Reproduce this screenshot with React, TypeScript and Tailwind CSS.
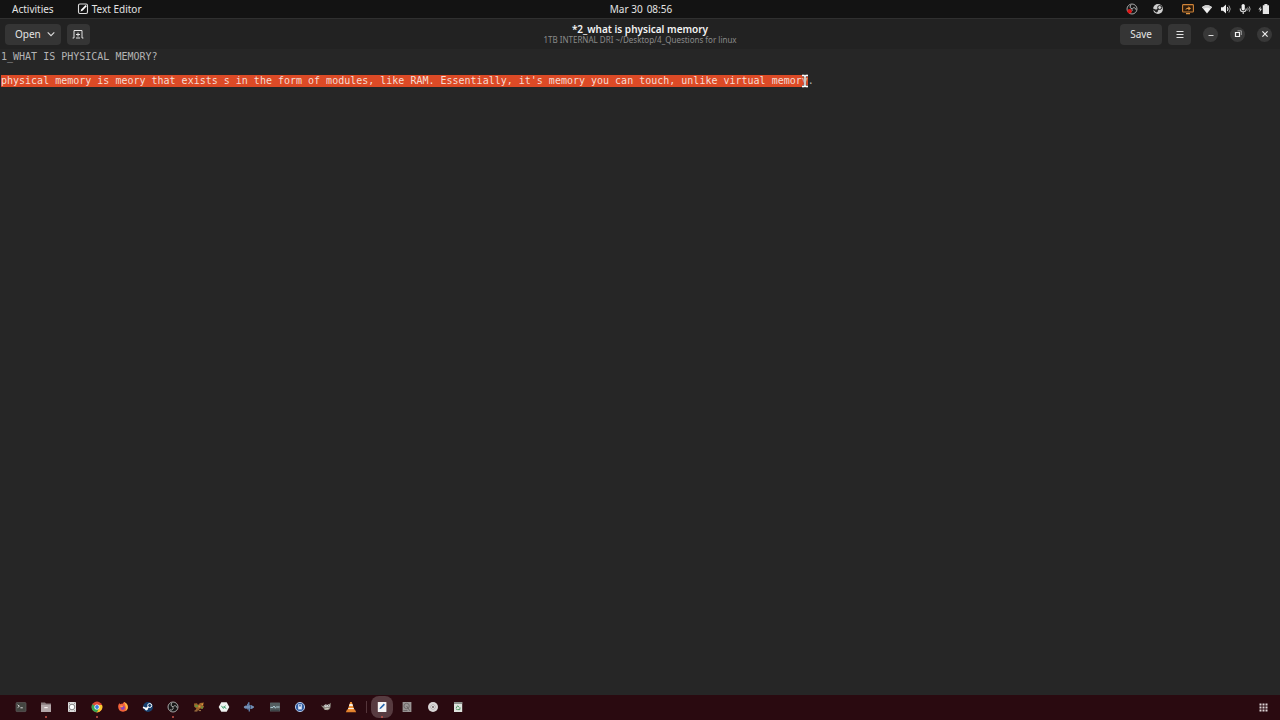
import { useEffect, useRef } from "react";
import type { ReactNode } from "react";

const HEADING = "1_WHAT IS PHYSICAL MEMORY?\n\n";
const ANSWER =
  "physical memory is meory that exists s in the form of modules, like RAM. Essentially, it's memory you can touch, unlike virtual memory";

function Icon({ children }: { children: ReactNode }) {
  return (
    <svg viewBox="0 0 12 12" className="size-3" aria-hidden="true">
      {children}
    </svg>
  );
}

const ObsMark = ({ badge = false }: { badge?: boolean }) => (
  <Icon>
    <circle cx="6" cy="6" r="5" fill="#161616" stroke="#b4b4b4" strokeWidth="0.9" />
    <path d="M6 5.8C3.8 5.6 3.5 3 5.2 1.8M6.2 5.8C7.4 4 9.8 4.6 10 6.8M6 6.2C6.7 8 5 9.8 3 8.8" fill="none" stroke="#b4b4b4" strokeWidth="1" />
    {badge && <circle cx="3.6" cy="8.2" r="2.2" fill="#e01414" />}
  </Icon>
);

const SteamMark = ({ blue = false }: { blue?: boolean }) => (
  <Icon>
    <circle cx="6" cy="6" r="4.9" fill={blue ? "#17406f" : "#cfcfcf"} />
    <path d="M1 6.3 4.6 8 7.4 4.8" fill="none" stroke={blue ? "#fff" : "#222"} strokeWidth="1.6" />
    <circle cx="7.7" cy="4.5" r="2" fill={blue ? "#17406f" : "#cfcfcf"} stroke={blue ? "#fff" : "#222"} strokeWidth="1" />
    <circle cx="4.4" cy="8" r="1.4" fill={blue ? "#fff" : "#222"} />
  </Icon>
);

const PencilNote = () => (
  <Icon>
    <rect x="1.5" y="1" width="9" height="9.5" rx="1.4" fill="none" stroke="#ddd" strokeWidth="1.1" />
    <path d="M3.6 8.5 4.4 6.3 8.6 2.1 9.8 3.3 5.8 7.5z" fill="#fff" />
  </Icon>
);

const tray = [
  {
    name: "Screen sharing",
    icon: (
      <Icon>
        <rect x="0.6" y="1.6" width="10.8" height="7.4" rx="0.8" fill="#2a1a0c" stroke="#d08438" strokeWidth="1.1" />
        <path d="M3.5 7.2C3.6 5.4 5 4.8 6.4 4.8V3.2L9 5.4 6.4 7.4V6.1C5 6 4.2 6.4 3.5 7.2zM4 10h4v1.2H4z" fill="#e0933f" />
      </Icon>
    ),
  },
  {
    name: "Wi-Fi",
    icon: (
      <Icon>
        <path d="M1 4.2C4 1.6 8 1.6 11 4.2L6 10.6z" fill="#f0f0f0" />
        <path d="M1 4.2C4 1.6 8 1.6 11 4.2L9.5 6.1C7.5 4.4 4.5 4.4 2.5 6.1z" fill="#ccc" />
      </Icon>
    ),
  },
  {
    name: "Volume",
    icon: (
      <Icon>
        <path d="M1 4.2H3L6 1.6V10.4L3 7.8H1z" fill="#f0f0f0" />
        <path d="M7.3 4.2Q8.7 6 7.3 7.8" fill="none" stroke="#eee" strokeWidth="1.1" />
        <path d="M8.9 2.5Q11.6 6 8.9 9.5" fill="none" stroke="#999" strokeWidth="1" />
      </Icon>
    ),
  },
  {
    name: "Microphone",
    icon: (
      <Icon>
        <rect x="2.6" y="1" width="3.2" height="6.4" rx="1.6" fill="#f0f0f0" />
        <path d="M1.2 5.5Q1.2 8.8 4.2 8.8Q7.2 8.8 7.2 5.5M4.2 8.8V11" fill="none" stroke="#ddd" strokeWidth="1.1" />
        <path d="M8.7 4.5Q9.7 6 8.7 7.6M10.2 3.4Q12 6 10.2 8.8" fill="none" stroke="#aaa" strokeWidth="1" />
      </Icon>
    ),
  },
  {
    name: "Battery",
    icon: (
      <Icon>
        <path d="M6.4 1h3v1.2H11V11H4.8V2.2H6.4z" fill="#e6e6e6" />
        <path d="M2.8 3.3 0.4 6.5H2L1.6 9.2 4 5.8H2.4z" fill="#ddd" />
      </Icon>
    ),
  },
];

type App = { name: string; icon: ReactNode; running?: boolean; active?: boolean };

const pinned: App[] = [
  {
    name: "Terminal",
    icon: (
      <Icon>
        <rect x="1" y="1.6" width="10" height="9" rx="0.8" fill="#444541" stroke="#666" strokeWidth="0.6" />
        <path d="M2.6 3.8 4.4 5.2 2.6 6.6M5.4 6.8h2.4" fill="none" stroke="#e6e6e6" strokeWidth="0.9" />
      </Icon>
    ),
  },
  {
    name: "Files",
    running: true,
    icon: (
      <Icon>
        <path d="M1 1.6h4l1 1h5v8H1z" fill="#8c7e80" />
        <path d="M1 3.8h10V11H1z" fill="#b3a7a9" />
        <path d="M4.3 6.6h3.4" stroke="#f6f0f0" strokeWidth="1.2" />
      </Icon>
    ),
  },
  {
    name: "Rhythmbox",
    icon: (
      <Icon>
        <rect x="2" y="1" width="8" height="10" rx="0.8" fill="#dedede" />
        <circle cx="6" cy="6" r="2.8" fill="#fff" stroke="#666" strokeWidth="0.8" />
        <path d="M3 2.3h1M8 2.3h1M3 9.8h1M8 9.8h1" stroke="#666" strokeWidth="0.7" />
      </Icon>
    ),
  },
  {
    name: "Chrome",
    running: true,
    icon: (
      <Icon>
        <circle cx="6" cy="6" r="5.4" fill="#dd4a38" />
        <path d="M1.3 3.3A5.4 5.4 0 0 0 5.8 11.4L8.2 7.2 6 6z" fill="#35a853" />
        <path d="M6 11.4A5.4 5.4 0 0 0 11 4H6L8.2 7.2z" fill="#f8c930" />
        <circle cx="6" cy="6" r="2.6" fill="#fff" />
        <circle cx="6" cy="6" r="1.9" fill="#3c7de0" />
      </Icon>
    ),
  },
  {
    name: "Firefox",
    icon: (
      <Icon>
        <path d="M1.2 6.2C1 4.6 1.6 3 2.4 2.2L3.4 3.3C4.2 2.6 5 2.8 5.6 2.8L7 1C9.8 2.2 11 4.2 10.9 6.6A4.9 4.9 0 0 1 1.2 6.2z" fill="#f2613b" />
        <path d="M7 1C9.8 2.2 11 4.2 10.9 6.6 10.5 8.4 9.6 9.4 8.5 10.2 9.8 6 7.8 4 7 1z" fill="#fdb544" />
        <circle cx="5.7" cy="6.8" r="2.1" fill="#8545bb" />
        <path d="M2.4 5.1Q4.6 4 6.4 5.4L4.8 6.4z" fill="#ff9b43" />
      </Icon>
    ),
  },
  { name: "Steam", icon: <SteamMark blue /> },
  { name: "OBS Studio", running: true, icon: <ObsMark /> },
  {
    name: "Game",
    icon: (
      <Icon>
        <path d="M1 2.5 4 2.2 5 4 7 2 11 1.6 10 4.2 11.2 5.4 9.4 8 7 7.4 5.6 9.6 2 9.8 3.4 7.4 1.2 5.8z" fill="#9c642b" />
        <path d="M2 4h3v2H2zM8 5.6h2v2H8z" fill="#6a8c3c" />
        <path d="M5.4 4.6h2v2h-2zM8.6 2.4h1.5v1.5H8.6z" fill="#df943c" />
        <path d="M1.4 10h3M6 9.6h2" stroke="#c4975c" strokeWidth="0.8" />
      </Icon>
    ),
  },
  {
    name: "Kdenlive",
    icon: (
      <Icon>
        <path d="M3.3 1.2h5.4L11.3 6 8.7 10.8H3.3L0.7 6z" fill="#f0f3f1" />
        <path d="M3.4 4.8 5.4 7.4 7.4 4.6M5.6 5.6 8.4 7.6" fill="none" stroke="#3c9c6a" strokeWidth="1" />
      </Icon>
    ),
  },
  {
    name: "Audio tool",
    icon: (
      <Icon>
        <path d="M0.6 6 2.5 4.4H4V2.8H5V1.3H6.5V4H8.5L11.2 6 9 8H7v2.4H5.6V8.6H4V7.8H2z" fill="#607da5" />
        <path d="M1 6h10" stroke="#9bb3d2" strokeWidth="0.7" />
        <path d="M7.5 4.4v3.2" stroke="#384967" strokeWidth="0.8" />
      </Icon>
    ),
  },
  {
    name: "System Monitor",
    icon: (
      <Icon>
        <rect x="1" y="1.5" width="10" height="9" rx="0.6" fill="#545d60" />
        <path d="M1.4 6.4H4L5 5 6.3 7 7.5 6H10.6" fill="none" stroke="#b9d9e4" strokeWidth="0.9" />
        <path d="M1.6 9.2h8.8" stroke="#2b3235" strokeWidth="0.8" />
      </Icon>
    ),
  },
  {
    name: "Password Manager",
    icon: (
      <Icon>
        <circle cx="6" cy="6" r="4.6" fill="#315da3" stroke="#b4c4e0" strokeWidth="1" />
        <path d="M4.2 3.2h3.6v5.2H4.2z" fill="#e0e8f8" />
        <path d="M5.2 3.8h1.6v1.6H5.2z" fill="#315da3" />
      </Icon>
    ),
  },
  {
    name: "GIMP",
    icon: (
      <Icon>
        <path d="M0.8 4.2 3 5 5.2 3.8 8 4 10.8 1.8 10.6 5.6Q10.4 8.8 7.4 9.2 4.2 9.2 3.2 7z" fill="#8c877f" />
        <circle cx="5.8" cy="4.8" r="1.4" fill="#eee" />
        <circle cx="8.4" cy="4.8" r="1.3" fill="#eee" />
        <path d="M5.6 4.8h.9M8 4.8h.9" stroke="#111" strokeWidth="0.9" />
        <path d="M4.6 8.2 8.6 7.5" stroke="#e9e1d5" strokeWidth="0.9" />
      </Icon>
    ),
  },
  {
    name: "VLC",
    icon: (
      <Icon>
        <path d="M2 8.4h8l1.2 2.8H0.8z" fill="#e3822d" />
        <path d="M5.2 1h1.6L9.3 8.8Q6 10 2.7 8.8z" fill="#ef9138" />
        <path d="M4.6 3h2.8l.6 2H4zM3.4 6.9h5.2l.4 1.2H3z" fill="#f5eee6" />
      </Icon>
    ),
  },
];

const open: App[] = [
  {
    name: "Text Editor",
    running: true,
    active: true,
    icon: (
      <Icon>
        <rect x="1.8" y="1" width="8.6" height="10" rx="0.6" fill="#f5f5f5" />
        <path d="M3.4 8.3 4 6.4 7.8 2.6 9 3.8 5.2 7.6z" fill="#2666ae" />
      </Icon>
    ),
  },
  {
    name: "Disk Usage",
    icon: (
      <Icon>
        <rect x="1.6" y="1" width="8.8" height="10" fill="#9a9595" />
        <circle cx="5.6" cy="5" r="2.7" fill="none" stroke="#696464" strokeWidth="0.9" />
        <path d="M5.6 5 8.8 9.8M2.4 9.6h4" stroke="#625e5e" strokeWidth="0.9" />
      </Icon>
    ),
  },
  {
    name: "Disc",
    icon: (
      <Icon>
        <circle cx="6" cy="6" r="5" fill="#dad6d6" />
        <circle cx="6" cy="6" r="2.2" fill="#fff" stroke="#a19b9b" strokeWidth="0.8" />
        <circle cx="6" cy="6" r="0.9" fill="#55474a" />
      </Icon>
    ),
  },
  {
    name: "Trash",
    icon: (
      <Icon>
        <path d="M2 1h8.2v10H2z" fill="#dfe4df" />
        <path d="M2 1h8.2v2H2z" fill="#8c918c" />
        <path d="M4.1 7 5.6 4.8 7.2 6.2M8 6.3 7.9 8.6H5.4M4.2 7.5l.8 1.4" fill="none" stroke="#4f9863" strokeWidth="1" />
      </Icon>
    ),
  },
];

function DockItem({ app }: { app: App }) {
  return (
    <button
      type="button"
      aria-label={app.name}
      className={`relative flex size-[22px] items-center justify-center rounded-lg ${app.active ? "bg-[#573b40]" : ""}`}
    >
      {app.icon}
      {app.running && <span className="absolute bottom-0 left-1/2 size-0.5 -translate-x-1/2 rounded-full bg-[#c9544a]" />}
    </button>
  );
}

export default function App() {
  const editor = useRef<HTMLTextAreaElement>(null);

  useEffect(() => {
    editor.current?.focus();
    editor.current?.setSelectionRange(HEADING.length, HEADING.length + ANSWER.length);
  }, []);

  return (
    <div className="flex h-screen flex-col overflow-hidden bg-[#262626] font-['Noto_Sans',sans-serif] text-[#e4e4e4]">
      <nav aria-label="System" className="grid h-[18px] shrink-0 grid-cols-[1fr_auto_1fr] items-center bg-[#131313] pr-[10px] pl-3 text-[10px] leading-4">
        <div className="flex items-center gap-[23px]">
          <button type="button">Activities</button>
          <button type="button" className="flex items-center gap-[3px]">
            <PencilNote />
            Text Editor
          </button>
        </div>
        <button type="button" className="flex gap-1">
          <span>Mar 30</span>
          <span>08:56</span>
        </button>
        <div className="flex items-center justify-end">
          <button type="button" aria-label="OBS Studio" className="mr-[14px]">
            <ObsMark badge />
          </button>
          <button type="button" aria-label="Steam" className="mr-[18px]">
            <SteamMark />
          </button>
          <div className="flex gap-[7px]">
            {tray.map((t) => (
              <button key={t.name} type="button" aria-label={t.name}>
                {t.icon}
              </button>
            ))}
          </div>
        </div>
      </nav>

      <header className="grid h-[31px] shrink-0 grid-cols-[1fr_auto_1fr] items-center border-t border-[#303030] bg-[#222222] px-[5px]">
        <div className="flex gap-[6px]">
          <button type="button" className="flex h-[21px] items-center gap-[6px] rounded bg-[#353535] pr-[6px] pl-[10px] text-[10px]">
            Open
            <svg viewBox="0 0 8 8" className="size-2" aria-hidden="true">
              <path d="M0.7 2.3 4 5.6 7.3 2.3" fill="none" stroke="#ddd" strokeWidth="1.1" />
            </svg>
          </button>
          <button type="button" aria-label="New tab" className="flex h-[21px] w-[23px] items-center justify-center rounded bg-[#353535]">
            <Icon>
              <path d="M0.6 10H2V2.5H10V10H11.4M4 6.5H8M6 4.5V8.5M4 10H8" fill="none" stroke="#e4e4e4" strokeWidth="1" />
            </Icon>
          </button>
        </div>
        <div className="text-center">
          <h1 className="text-[10px] leading-[11px] font-semibold text-[#f4f4f4]">*2_what is physical memory</h1>
          <p className="text-[8px] leading-[10px] text-[#8a8a8a]">1TB INTERNAL DRI ~/Desktop/4_Questions for linux</p>
        </div>
        <div className="flex items-center justify-end">
          <button type="button" className="mr-[6px] h-[21px] rounded bg-[#353535] px-[10px] text-[10px]">Save</button>
          <button type="button" aria-label="Menu" className="mr-3 flex h-[21px] w-[23px] items-center justify-center rounded bg-[#353535]">
            <Icon>
              <path d="M2.5 3.5h7M2.5 6.5h7M2.5 9.5h7" stroke="#e4e4e4" />
            </Icon>
          </button>
          <div className="flex gap-3 pr-[3px]">
            <button type="button" aria-label="Minimize" className="flex size-[15px] items-center justify-center rounded-full bg-[#383838]">
              <Icon>
                <path d="M3.5 7.5h5" stroke="#ddd" />
              </Icon>
            </button>
            <button type="button" aria-label="Restore" className="flex size-[15px] items-center justify-center rounded-full bg-[#383838]">
              <Icon>
                <path d="M3.5 4.5h4v4h-4z" fill="none" stroke="#f4f4f4" strokeWidth="1.2" />
                <path d="M5.5 2.8h3.8V7" fill="none" stroke="#aaa" strokeWidth="0.9" />
              </Icon>
            </button>
            <button type="button" aria-label="Close" className="flex size-[15px] items-center justify-center rounded-full bg-[#383838]">
              <Icon>
                <path d="M3.4 3.4 8.6 8.6M8.6 3.4 3.4 8.6" stroke="#eee" strokeWidth="1.2" />
              </Icon>
            </button>
          </div>
        </div>
      </header>

      <main className="relative flex min-h-0 flex-1">
        <textarea
          ref={editor}
          aria-label="Document"
          spellCheck={false}
          defaultValue={`${HEADING}${ANSWER}.`}
          className="w-full flex-1 resize-none bg-[#262626] px-px pt-[2px] font-['DejaVu_Sans_Mono',monospace] text-[10px] leading-3 text-[#b4b4b4] outline-none selection:bg-[#dc4a26] selection:text-[#f4dcd4]"
        />
        <svg viewBox="0 0 8 14" className="pointer-events-none absolute top-[25px] left-[801px] h-3.5 w-2" aria-hidden="true">
          <path d="M1 1.5H3L4 2.5 5 1.5H7M4 2.5V11.5M1 12.5H3L4 11.5 5 12.5H7" fill="none" stroke="#444" strokeWidth="2.4" />
          <path d="M1 1.5H3L4 2.5 5 1.5H7M4 2.5V11.5M1 12.5H3L4 11.5 5 12.5H7" fill="none" stroke="#fff" strokeWidth="1.4" />
        </svg>
      </main>

      <footer className="flex h-[25px] shrink-0 items-center justify-between bg-[#2a0a10] pr-[11px] pb-px pl-[10px]">
        <div className="flex items-center">
          <div className="flex w-[352px] justify-between">
            {pinned.map((app) => (
              <DockItem key={app.name} app={app} />
            ))}
          </div>
          <span className="mx-1 h-3 w-px bg-[#55363b]" />
          <div className="flex w-[98px] justify-between">
            {open.map((app) => (
              <DockItem key={app.name} app={app} />
            ))}
          </div>
        </div>
        <button type="button" aria-label="Show applications">
          <Icon>
            <path d="M2.5 2.5h2v2h-2zM5.5 2.5h2v2h-2zM8.5 2.5h2v2h-2zM2.5 5.5h2v2h-2zM5.5 5.5h2v2h-2zM8.5 5.5h2v2h-2zM2.5 8.5h2v2h-2zM5.5 8.5h2v2h-2zM8.5 8.5h2v2h-2z" fill="#dcd4d5" />
          </Icon>
        </button>
      </footer>
    </div>
  );
}
